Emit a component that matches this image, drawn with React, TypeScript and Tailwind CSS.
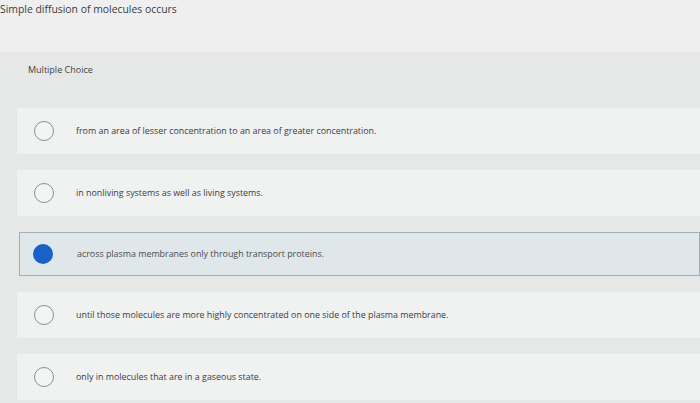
const options = [
  { text: 'from an area of lesser concentration to an area of greater concentration.', selected: false },
  { text: 'in nonliving systems as well as living systems.', selected: false },
  { text: 'across plasma membranes only through transport proteins.', selected: true },
  { text: 'until those molecules are more highly concentrated on one side of the plasma membrane.', selected: false },
  { text: 'only in molecules that are in a gaseous state.', selected: false },
];

function Radio({ checked }: { checked: boolean }) {
  if (checked) {
    return <span className="block h-[20px] w-[20px] shrink-0 rounded-full bg-[#1b5fc9]" />;
  }
  return <span className="block h-[20px] w-[20px] shrink-0 rounded-full border-[1.5px] border-[#8c8f92] bg-[#f3f4f4]" />;
}

export default function App() {
  return (
    <div className="h-[403px] w-[700px] overflow-hidden bg-[#e6e7e7] font-['Open_Sans',Arial,sans-serif] text-[#3b3c3d]">
      <div className="h-[52px] bg-[#efefef] pt-[2px]">
        <h1 className="text-[10.4px] leading-[14px]">Simple diffusion of molecules occurs</h1>
      </div>
      <div className="pl-[28px] pt-[12px] text-[9px] leading-[12px] text-[#444]">Multiple Choice</div>
      <div className="flex flex-col gap-[16px] pl-[17px] pt-[32px]">
        {options.map((o, i) =>
          o.selected ? (
            <div
              key={i}
              className="ml-[2px] flex h-[44px] items-center gap-[24px] border border-[#a6aeb3] bg-[#dfe7eb] pl-[13px]"
            >
              <Radio checked />
              <span className="text-[8.9px] text-[#4a4d50]">{o.text}</span>
            </div>
          ) : (
            <div key={i} className="flex h-[46px] items-center gap-[22px] bg-[#f0f1f1] pl-[17px]">
              <Radio checked={false} />
              <span className="text-[8.9px]">{o.text}</span>
            </div>
          )
        )}
      </div>
    </div>
  );
}
